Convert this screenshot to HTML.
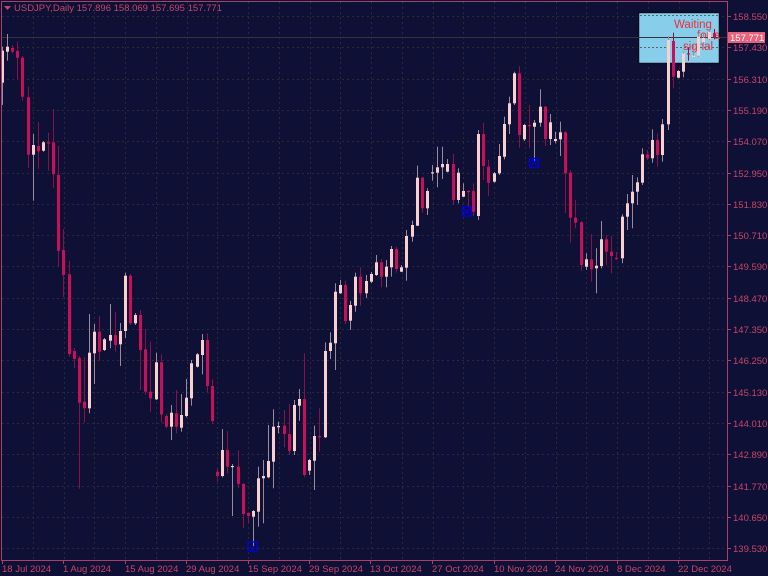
<!DOCTYPE html>
<html><head><meta charset="utf-8"><style>
html,body{margin:0;padding:0;background:#0e1035;width:768px;height:576px;overflow:hidden}
svg{display:block}
text{font-family:"Liberation Sans",sans-serif;font-size:9.5px;fill:#c8456a}
</style></head><body>
<svg id="s" width="768" height="576" viewBox="0 0 768 576" xmlns="http://www.w3.org/2000/svg">
<rect width="768" height="576" fill="#0e1035"/>
<g id="grid" stroke="#2a2935" stroke-width="1" stroke-dasharray="2,3"></g>
<rect x="638.5" y="12.5" width="81" height="51" fill="#87ceeb" stroke="#0a0a20" stroke-width="1.5"/>
<line x1="640" y1="15.5" x2="718" y2="15.5" stroke="#4a6a78" stroke-dasharray="2,2"/>
<line x1="640" y1="47.5" x2="718" y2="47.5" stroke="#4a6a78" stroke-dasharray="2,2"/>
<line x1="1" y1="37.5" x2="727" y2="37.5" stroke="#33333d"/>
<text x="674" y="28" style="font-size:11.5px;fill:#e8303e">Waiting</text>
<text x="697" y="39" style="font-size:11.5px;fill:#e8303e">for a</text>
<text x="683" y="50" style="font-size:11.5px;fill:#e8303e">signal</text>
<g id="c"></g>
<g fill="none" stroke="#0000ee" stroke-width="1.3">
<rect x="248" y="542" width="9" height="9"/><path d="M250 547l2 2 3-4"/>
<rect x="462.5" y="207" width="9" height="9"/><path d="M464.5 209l5 5M469.5 209l-5 5"/>
<rect x="529.5" y="158.5" width="9" height="9"/><path d="M531.5 160l5 5M536.5 160l-5 5"/>
</g>
<line x1="1.5" y1="1" x2="1.5" y2="560" stroke="#a8406a"/>
<line x1="1" y1="1.5" x2="727" y2="1.5" stroke="#a8406a"/>
<line x1="727.5" y1="1" x2="727.5" y2="561" stroke="#a8406a"/>
<line x1="1" y1="560.5" x2="728" y2="560.5" stroke="#a8406a"/>
<g id="ax"></g>
<path d="M4 6h7l-3.5 4z" fill="#c8456a"/>
<text x="14" y="11">USDJPY,Daily  157.896 158.069 157.695 157.771</text>
<rect x="728" y="32" width="37" height="11" fill="#e8607a"/>
<text x="730" y="41" style="fill:#fff">157.771</text>
</svg>
<script>
var NS="http://www.w3.org/2000/svg";
function el(p,t,a,txt){var e=document.createElementNS(NS,t);for(var k in a)e.setAttribute(k,a[k]);if(txt)e.textContent=txt;p.appendChild(e);return e;}
var g=document.getElementById('grid'),ax=document.getElementById('ax');
var prices=["158.550","157.430","156.310","155.190","154.070","152.950","151.830","150.710","149.590","148.470","147.350","146.250","145.130","144.010","142.890","141.770","140.650","139.530"];
for(var i=0;i<prices.length;i++){var y=Math.round(16+i*31.3)+0.5;
 el(g,'line',{x1:2,y1:y,x2:727,y2:y});
 el(ax,'line',{x1:727,y1:y,x2:731,y2:y,stroke:'#a8406a'});
 el(ax,'text',{x:733,y:y+3.5},prices[i]);}
for(var k=1;k<24;k++){var x=Math.round(2+k*30.75)+0.5;if(x<727)el(g,'line',{x1:x,y1:2,x2:x,y2:560});}
var dates=[[2,"18 Jul 2024"],[63,"1 Aug 2024"],[125,"15 Aug 2024"],[186,"29 Aug 2024"],[248,"15 Sep 2024"],[309,"29 Sep 2024"],[370,"13 Oct 2024"],[432,"27 Oct 2024"],[494,"10 Nov 2024"],[555,"24 Nov 2024"],[617,"8 Dec 2024"],[678,"22 Dec 2024"]];
dates.forEach(function(d){el(ax,'line',{x1:d[0]+0.5,y1:560,x2:d[0]+0.5,y2:564,stroke:'#a8406a'});el(ax,'text',{x:d[0],y:572},d[1]);});
var D=[[82.7,50.7,46.7,105],[51.7,46.7,34,60.7],[48,51.7,45,53.3],[51,57.7,41.7,79],[57.7,96.7,56,100.7],[97.3,154.7,86.7,168],[154.7,145,134,200.7],[146,151.3,122,169],[150.7,142.3,141,151.7],[142.3,143,132.7,170.7],
[142.3,174.3,109,187.7],[175,250.7,146,266.7],[250,275,229,297],[274.3,354,260.7,356.7],[351,359,348,368],[358,402.7,356,488.7],[401.7,408.3,357,422.7],[408.3,352.7,314,413.3],[353.3,331.7,324,384],[331.7,351.7,316,360.7],
[350,339.3,338,351],[340.7,335,304,348.3],[335,345,312,351.7],[344.3,331,323,366],[331,275.7,272.7,338],[275.7,323.3,274,325],[323.3,315,313,325],[315,350,310,390],[349.3,391.7,329,395],[391.7,398.3,341.7,411.7],
[399.3,362.3,352.7,400],[362.3,414.3,354.3,422.7],[416,426.7,414,428.3],[426.7,412.7,405,440],[413.3,426.7,390,433.3],[427.7,415,394,431.7],[416,397.7,379,417.3],[398.3,363.3,360,405.7],[366.7,354.3,353,367.5],[355,340,334,374.3],
[340,386,333.3,392.7],[386,421,379.3,424.3],[471.7,476,468,481.7],[476,450,429,477.3],[450,466.7,431,473.3],[466.7,466,464,516],[466.7,484,450,488.3],[484,514,483,528.3],[513,516,512,523],[516.7,511,510,546.7],
[511.7,478.3,466.7,526.7],[478.3,476,460,523.3],[477.3,461,425,478.3],[461.7,426.7,409.3,488.3],[426.5,426,421.7,433.3],[425.7,434,410,447.3],[434,450.7,404,455],[451,405,400,455],[405.7,399,389,420.7],[399,475,353.3,477.3],
[470.7,460,459,475],[460.7,436,425.7,490],[436,437.3,408.3,451.7],[437.3,351,342.3,438],[351,342.7,332.3,359],[343.3,291.7,283.3,370],[293.3,285,280,294],[285,321,280.7,324],[320.7,305,301,330],[305.7,276.7,272.7,311.7],
[276.7,293.3,267.3,305.7],[293.3,281,275,298],[281.7,274,272,283],[275,262.3,255,276],[262.3,276.7,259,287.3],[276.7,266.7,260,287.3],[267.3,249,246,276.7],[249,269,246.7,272.7],[271.7,267.3,265,272],[267.7,236,230,280.7],
[236.7,225,220.7,241.7],[225.7,177.7,165.7,226],[177.7,208.3,177,212.7],[208.3,191,188.3,215],[172.7,172.3,165,180.7],[172.7,167.3,146.7,187.3],[167.3,164,146.7,179],[171.7,164,159,172.3],[164,200,154,205],[200,172.7,168.3,203.3],
[196.7,191,183.3,197],[191,191.7,190,206.7],[191,211.7,183.3,216],[216,134,130,220],[134,166,122.7,180],[166.7,182.7,160,196],[181.7,173.3,172,182.7],[173.3,156,144,175],[156.7,124,116.7,159.3],[124.3,103.3,96.7,134],
[103.3,73.3,71.7,105],[73.3,135,66,147.7],[139.3,125,124,141],[125,125.7,105,148.3],[126.7,122.7,120,160.7],[122.7,106.7,89.3,126.7],[106.7,139,106,146],[139,122.3,114,145],[141,139,131.7,143.3],[139.3,132.3,121.7,156],
[132.3,173.3,131,213],[172.7,217.7,170,242.7],[217.7,222.7,200,228.3],[222.3,265,221,270.7],[266.7,259.3,253.3,270],[259.3,269.3,234,281.7],[268.3,265.7,248.3,293.3],[266,239.3,221,268.3],[239.3,251.7,235,265],[251.7,256,236,273.3],
[258,258.6,252,260],[258.3,216.7,214.3,263.3],[216.7,203.3,194,230],[203.3,191.7,175,228.3],[191.7,182.3,177.3,205],[182.7,154.3,148.3,185],[154.3,158.3,150,160],[158.3,140,129.3,162.7],[140,155,133.3,166.7],[155,124.3,119,161.7],
[124.3,40,36,130],[41,76.7,32.7,88.3],[77.7,71,70,78.3],[71.7,53.3,51.7,77.3],[53.3,54,48,60.7],[57.3,55.7,45,58],[55.7,36.7,33,56.7],[42,38,33,45],[39,32,30,40],[33,37.8,29,39.3]];
var c=document.getElementById('c');
D.forEach(function(d,i){var x=Math.round(2+i*5.12);var bull=d[1]<d[0];
 var bc=bull?'#f7d0cf':'#c8105a',wc=bull?'#9a8a9a':'#8a1048';
 el(c,'rect',{x:x,y:d[2],width:1,height:d[3]-d[2],fill:wc});
 var t=Math.min(d[0],d[1]),h=Math.max(Math.abs(d[1]-d[0]),1.2);
 el(c,'rect',{x:x-1,y:t,width:3,height:h,fill:bc});});
</script>
</body></html>
